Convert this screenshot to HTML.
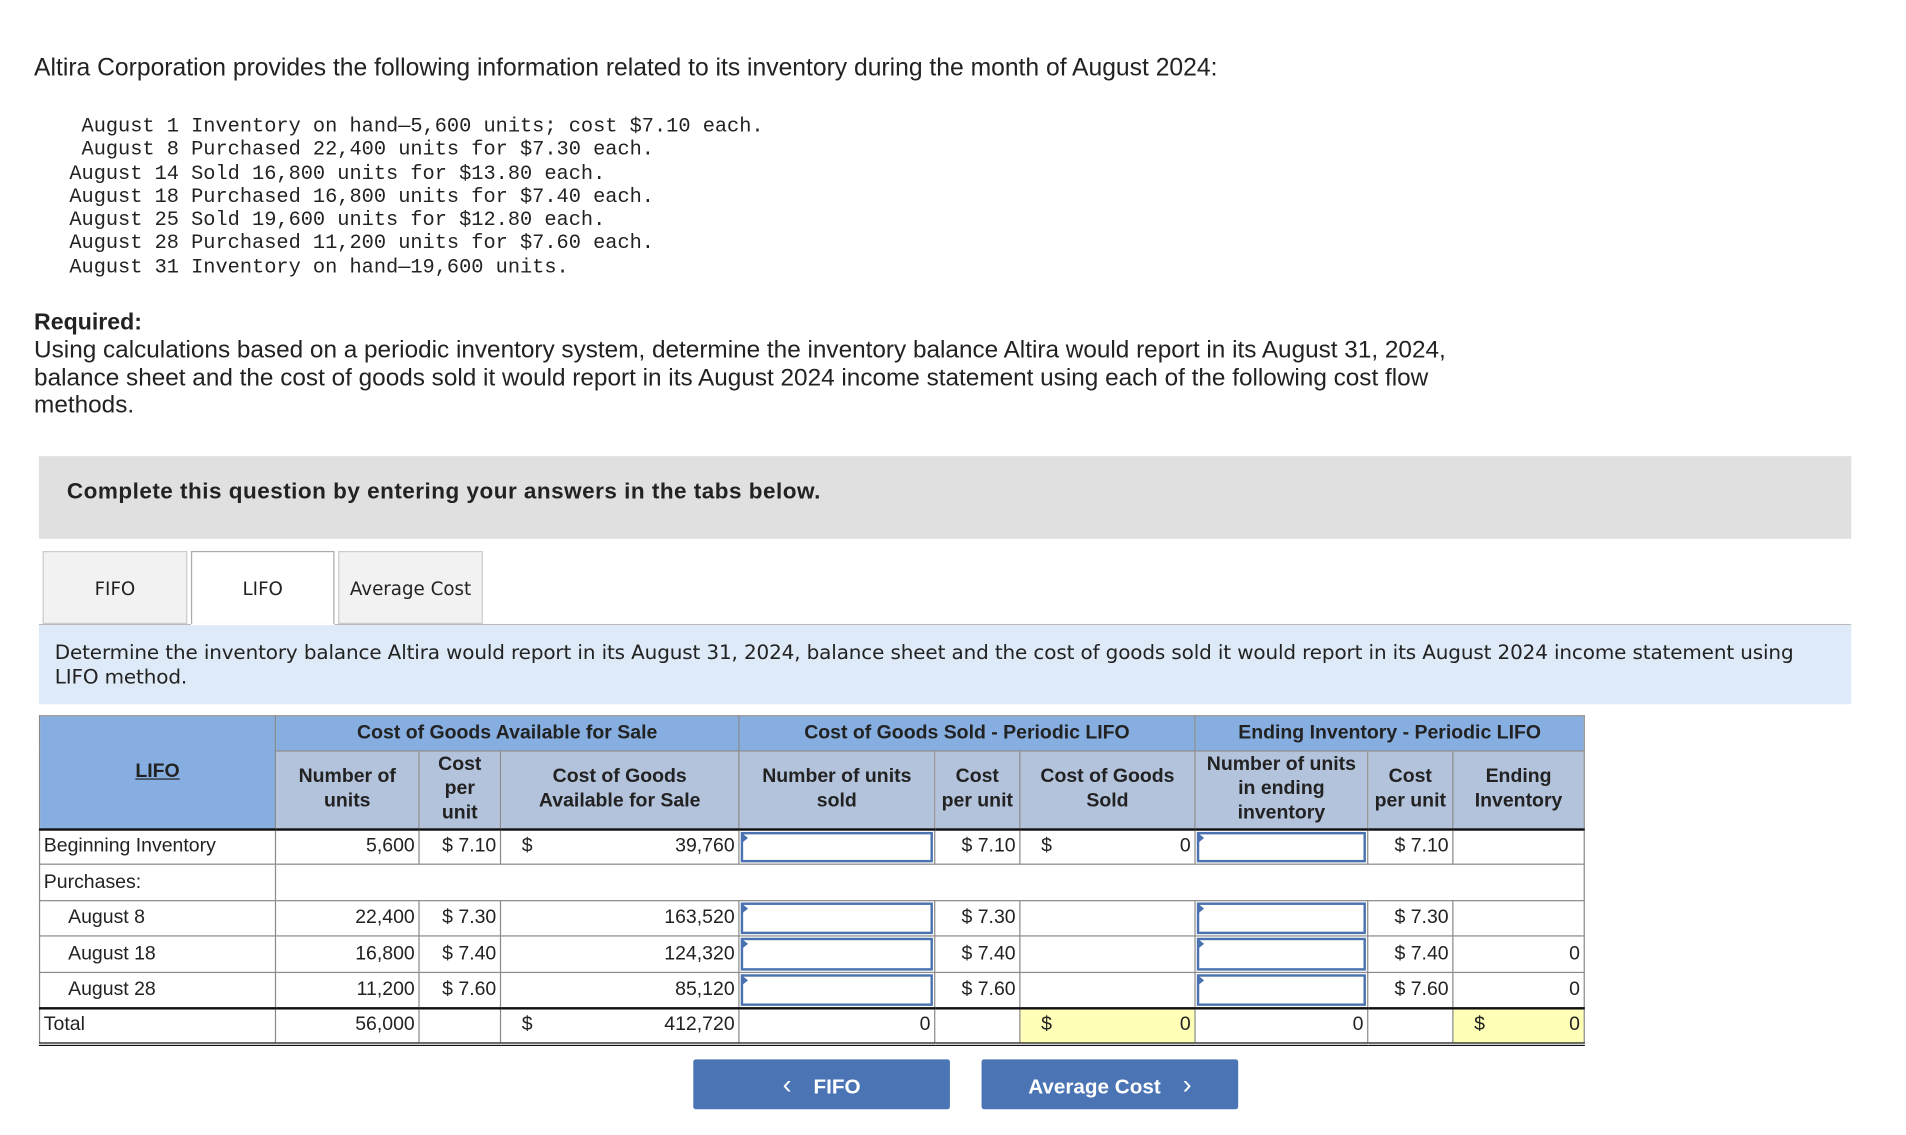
<!DOCTYPE html>
<html><head><meta charset="utf-8"><style>
html,body{margin:0;padding:0;background:#fff;width:1906px;height:1134px;overflow:hidden}
#w{position:absolute;left:0;top:0;width:1567px;height:933px;transform:scale(1.2163);transform-origin:0 0;font-family:"Liberation Sans",Arial,sans-serif;color:#222}
.a{position:absolute;white-space:nowrap}
pre{position:absolute;margin:0;font-family:"Liberation Mono",monospace;font-size:16.7px;line-height:19.3px;color:#222}
.tab{position:absolute;top:453px;height:60px;box-sizing:border-box;border:1px solid #ccc;background:#f2f2f2;font-family:"DejaVu Sans",sans-serif;font-size:15px;text-align:center;line-height:60px}
table{position:absolute;left:32px;top:588px;border-collapse:collapse;table-layout:fixed;font-size:16px}
td{border:1px solid #8a8a8a;padding:0 3px;white-space:nowrap;overflow:hidden}
.h1{background:#86aee0;font-weight:bold;text-align:center}
.h2{background:#b4c3dc;font-weight:bold;text-align:center;line-height:20px;border-bottom:2px solid #111}
.r{text-align:right}
.in{padding:0;position:relative}
.in div{position:absolute;left:1px;top:1px;right:1px;bottom:1px;border:2px solid #4a72b0;background:#fff}
.in div:before{content:"";position:absolute;left:-1px;top:-1px;border-left:5px solid #4a72b0;border-top:4px solid transparent;border-bottom:4px solid transparent}
.y{background:#ffffb8}
.tot td{border-top:2px solid #111;border-bottom:3px double #111}
.btn{position:absolute;top:871px;height:41px;width:211px;background:#4a74b4;color:#fff;font-weight:bold;font-size:17px;text-align:center;line-height:41px;border-radius:2px}
.btn span{font-size:22px;font-weight:normal}
</style></head><body><div id="w">
<div class="a" style="left:28px;top:45px;font-size:20.3px">Altira Corporation provides the following information related to its inventory during the month of August 2024:</div>
<pre style="left:57px;top:95px"> August 1 Inventory on hand—5,600 units; cost $7.10 each.
 August 8 Purchased 22,400 units for $7.30 each.
August 14 Sold 16,800 units for $13.80 each.
August 18 Purchased 16,800 units for $7.40 each.
August 25 Sold 19,600 units for $12.80 each.
August 28 Purchased 11,200 units for $7.60 each.
August 31 Inventory on hand—19,600 units.</pre>
<div class="a" style="left:28px;top:255px;font-size:19px;font-weight:bold">Required:</div>
<div class="a" style="left:28px;top:277px;font-size:20px;line-height:22.7px;white-space:normal;width:1190px">Using calculations based on a periodic inventory system, determine the inventory balance Altira would report in its August 31, 2024, balance sheet and the cost of goods sold it would report in its August 2024 income statement using each of the following cost flow methods.</div>
<div class="a" style="left:32px;top:375px;width:1490px;height:68px;background:#e0e0e0"></div>
<div class="a" style="left:55px;top:393px;font-size:18.5px;font-weight:bold;letter-spacing:0.4px">Complete this question by entering your answers in the tabs below.</div>
<div class="tab" style="left:35px;width:119px">FIFO</div>
<div class="tab" style="left:157px;width:118px;background:#fff;border-color:#aaa;border-bottom:none;height:62px">LIFO</div>
<div class="tab" style="left:278px;width:119px">Average Cost</div>
<div class="a" style="left:32px;top:513px;width:1490px;height:1px;background:#bbb"></div>
<div class="a" style="left:157px;top:513px;width:118px;height:2px;background:#fff"></div>
<div class="a" style="left:32px;top:514px;width:1490px;height:65px;background:#deeaf7"></div>
<div class="a" style="left:45px;top:527px;font-family:'DejaVu Sans',sans-serif;font-size:16.4px;line-height:20px;white-space:normal;width:1478px;letter-spacing:-0.1px">Determine the inventory balance Altira would report in its August 31, 2024, balance sheet and the cost of goods sold it would report in its August 2024 income statement using<br>LIFO method.</div>
<table>
<colgroup><col style="width:194px"><col style="width:118px"><col style="width:67px"><col style="width:196px"><col style="width:161px"><col style="width:70px"><col style="width:144px"><col style="width:142px"><col style="width:70px"><col style="width:108px"></colgroup>
<tr style="height:29px"><td class="h1" rowspan="2" style="border-bottom:2px solid #111"><u>LIFO</u></td><td class="h1" colspan="3">Cost of Goods Available for Sale</td><td class="h1" colspan="3">Cost of Goods Sold - Periodic LIFO</td><td class="h1" colspan="3">Ending Inventory - Periodic LIFO</td></tr>
<tr style="height:64px"><td class="h2">Number of<br>units</td><td class="h2">Cost<br>per<br>unit</td><td class="h2">Cost of Goods<br>Available for Sale</td><td class="h2">Number of units<br>sold</td><td class="h2">Cost<br>per unit</td><td class="h2">Cost of Goods<br>Sold</td><td class="h2">Number of units<br>in ending<br>inventory</td><td class="h2">Cost<br>per unit</td><td class="h2">Ending<br>Inventory</td></tr>
<tr style="height:29px"><td>Beginning Inventory</td><td class="r">5,600</td><td class="r">$ 7.10</td><td class="r"><span style="float:left;padding-left:14px">$</span>39,760</td><td class="in"><div></div></td><td class="r">$ 7.10</td><td class="r"><span style="float:left;padding-left:14px">$</span>0</td><td class="in"><div></div></td><td class="r">$ 7.10</td><td></td></tr>
<tr style="height:30px"><td>Purchases:</td><td colspan="9"></td></tr>
<tr style="height:29px"><td style="padding-left:23px">August 8</td><td class="r">22,400</td><td class="r">$ 7.30</td><td class="r">163,520</td><td class="in"><div></div></td><td class="r">$ 7.30</td><td></td><td class="in"><div></div></td><td class="r">$ 7.30</td><td></td></tr>
<tr style="height:30px"><td style="padding-left:23px">August 18</td><td class="r">16,800</td><td class="r">$ 7.40</td><td class="r">124,320</td><td class="in"><div></div></td><td class="r">$ 7.40</td><td></td><td class="in"><div></div></td><td class="r">$ 7.40</td><td class="r">0</td></tr>
<tr style="height:29px"><td style="padding-left:23px">August 28</td><td class="r">11,200</td><td class="r">$ 7.60</td><td class="r">85,120</td><td class="in"><div></div></td><td class="r">$ 7.60</td><td></td><td class="in"><div></div></td><td class="r">$ 7.60</td><td class="r">0</td></tr>
<tr class="tot" style="height:30px"><td>Total</td><td class="r">56,000</td><td></td><td class="r"><span style="float:left;padding-left:14px">$</span>412,720</td><td class="r">0</td><td></td><td class="r y"><span style="float:left;padding-left:14px">$</span>0</td><td class="r">0</td><td></td><td class="r y"><span style="float:left;padding-left:14px">$</span>0</td></tr>
</table>
<div class="btn" style="left:570px"><span style="margin-right:18px">&#x2039;</span>FIFO</div>
<div class="btn" style="left:807px">Average Cost<span style="margin-left:18px">&#x203A;</span></div>
</div></body></html>
